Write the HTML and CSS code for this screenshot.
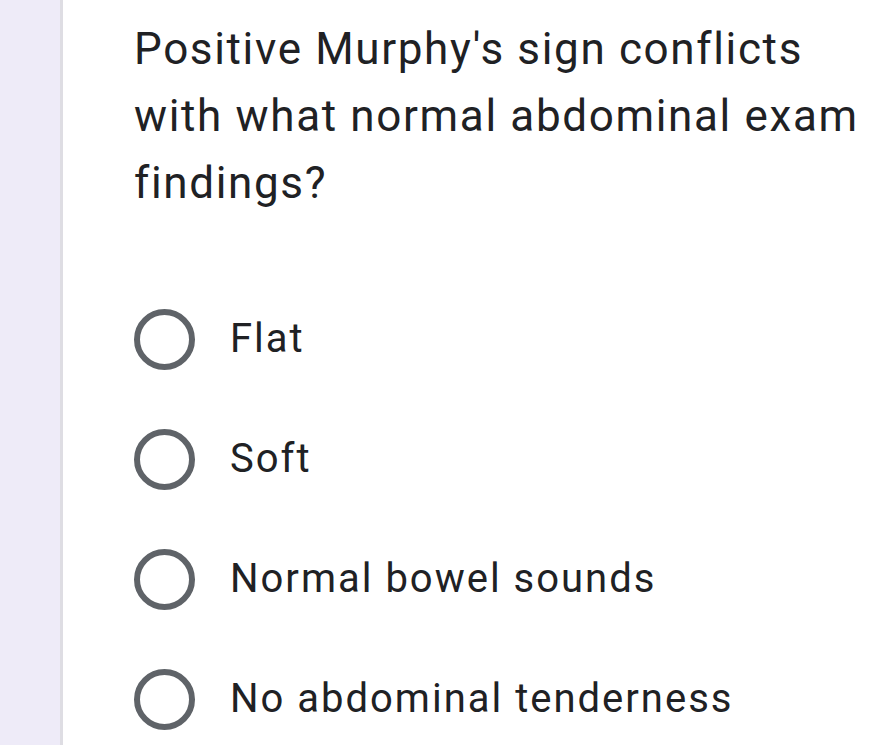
FILE: index.html
```html
<!DOCTYPE html>
<html>
<head>
<meta charset="utf-8">
<link rel="stylesheet" href="styles.css">
</head>
<body>
<div class="page">
  <div class="side"></div>
  <main class="card">
    <h1 class="question">Positive Murphy's sign conflicts with what normal abdominal exam findings?</h1>
    <ul class="options">
      <li class="option"><span class="radio"></span><span class="label">Flat</span></li>
      <li class="option"><span class="radio"></span><span class="label">Soft</span></li>
      <li class="option"><span class="radio"></span><span class="label">Normal bowel sounds</span></li>
      <li class="option"><span class="radio"></span><span class="label">No abdominal tenderness</span></li>
    </ul>
  </main>
</div>
</body>
</html>
```
FILE: styles.css
```css
html, body {
  margin: 0;
  padding: 0;
  background: #ffffff;
  height: 100%;
  overflow: hidden;
}
.page {
  display: flex;
  height: 745px;
  font-family: Roboto, "Noto Sans", sans-serif;
  color: #202124;
}
.side {
  width: 60px;
  flex: none;
  background: #eeebf8;
  border-right: 3px solid #dedde3;
}
.card {
  flex: 1;
  background: #ffffff;
  padding: 16px 0 0 71px;
}
.question {
  margin: 0;
  font-size: 44px;
  font-weight: 400;
  line-height: 67px;
  letter-spacing: 1.65px;
  width: 750px;
}
.options {
  list-style: none;
  margin: 62px 0 0 0;
  padding: 0;
}
.option {
  display: flex;
  align-items: center;
  height: 120px;
}
.radio {
  box-sizing: border-box;
  width: 61px;
  height: 61px;
  border: 6.5px solid #5f6368;
  border-radius: 50%;
  flex: none;
}
.label {
  margin-left: 35px;
  font-size: 40px;
  line-height: 48px;
  letter-spacing: 2px;
}
```
